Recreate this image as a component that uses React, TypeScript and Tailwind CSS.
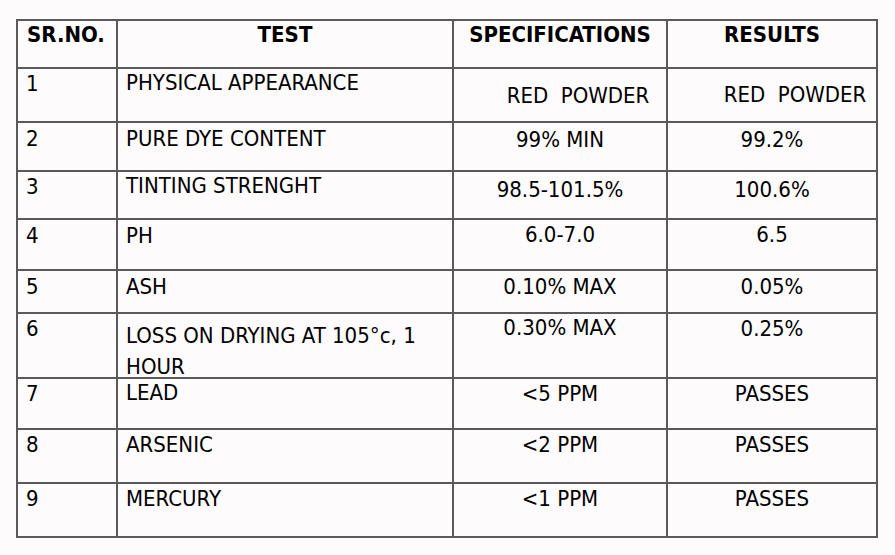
const rows = [
  { no: '1', test: 'PHYSICAL APPEARANCE', spec: 'RED  POWDER', result: 'RED  POWDER', h: 'h-[54px]' },
  { no: '2', test: 'PURE DYE CONTENT', spec: '99% MIN', result: '99.2%', h: 'h-[49px]' },
  { no: '3', test: 'TINTING STRENGHT', spec: '98.5-101.5%', result: '100.6%', h: 'h-[48px]' },
  { no: '4', test: 'PH', spec: '6.0-7.0', result: '6.5', h: 'h-[51px]' },
  { no: '5', test: 'ASH', spec: '0.10% MAX', result: '0.05%', h: 'h-[43px]' },
  { no: '6', test: 'LOSS ON DRYING AT 105°c, 1 HOUR', spec: '0.30% MAX', result: '0.25%', h: 'h-[65px]' },
  { no: '7', test: 'LEAD', spec: '<5 PPM', result: 'PASSES', h: 'h-[51px]' },
  { no: '8', test: 'ARSENIC', spec: '<2 PPM', result: 'PASSES', h: 'h-[54px]' },
  { no: '9', test: 'MERCURY', spec: '<1 PPM', result: 'PASSES', h: 'h-[54px]' },
]

// per-row top offsets so the caps land where the scan has them
const pad: Record<string, { no: string; test: string; spec: string; result: string }> = {
  '1': { no: 'pt-[3px]', test: 'pt-[2px]', spec: 'pt-[15px] pl-[36px]', result: 'pt-[14px] pl-[46px]' },
  '2': { no: 'pt-[4px]', test: 'pt-[4px]', spec: 'pt-[5px]', result: 'pt-[5px]' },
  '3': { no: 'pt-[3px]', test: 'pt-[2px]', spec: 'pt-[6px]', result: 'pt-[6px]' },
  '4': { no: 'pt-[4px]', test: 'pt-[4px]', spec: 'pt-[3px]', result: 'pt-[3px]' },
  '5': { no: 'pt-[4px]', test: 'pt-[4px]', spec: 'pt-[4px]', result: 'pt-[4px]' },
  '6': { no: 'pt-[3px]', test: 'pt-[6px]', spec: 'pt-[2px]', result: 'pt-[3px]' },
  '7': { no: 'pt-[3px]', test: 'pt-[2px]', spec: 'pt-[3px]', result: 'pt-[3px]' },
  '8': { no: 'pt-[3px]', test: 'pt-[3px]', spec: 'pt-[3px]', result: 'pt-[3px]' },
  '9': { no: 'pt-[3px]', test: 'pt-[3px]', spec: 'pt-[3px]', result: 'pt-[3px]' },
}

const cell = 'border-r-2 border-b-2 border-[#5a5a5a] align-top whitespace-pre-wrap'

export default function App() {
  return (
    <div
      className="min-h-[555px] w-[895px] bg-[#fdfbfb] pl-[16px] pt-[19px] text-[22px] leading-[24px] text-black"
      style={{ fontFamily: '"DejaVu Sans Condensed", "DejaVu Sans", sans-serif' }}
    >
      <table className="table-fixed w-[862px] border-separate border-spacing-0 border-l-2 border-t-2 border-[#5a5a5a]">
        <thead>
          <tr className="h-[48px]">
            <th className={`${cell} w-[100px] pl-[9px] pt-[2px] text-left font-bold`}>SR.NO.</th>
            <th className={`${cell} w-[336px] pt-[2px] text-center font-bold`}>TEST</th>
            <th className={`${cell} w-[214px] pt-[2px] text-center font-bold`}>SPECIFICATIONS</th>
            <th className={`${cell} w-[210px] pt-[2px] text-center font-bold`}>RESULTS</th>
          </tr>
        </thead>
        <tbody>
          {rows.map((r) => (
            <tr key={r.no} className={r.h}>
              <td className={`${cell} pl-[8px] ${pad[r.no].no}`}>{r.no}</td>
              <td className={`${cell} pl-[8px] pr-[20px] ${pad[r.no].test}`}>
                {r.no === '6' ? (
                  // two-line cell: wider leading, but keep the row at its scanned height
                  <div className="h-[55px] leading-[31px]">{r.test}</div>
                ) : (
                  r.test
                )}
              </td>
              <td className={`${cell} text-center ${pad[r.no].spec}`}>{r.spec}</td>
              <td className={`${cell} text-center ${pad[r.no].result}`}>{r.result}</td>
            </tr>
          ))}
        </tbody>
      </table>
    </div>
  )
}
